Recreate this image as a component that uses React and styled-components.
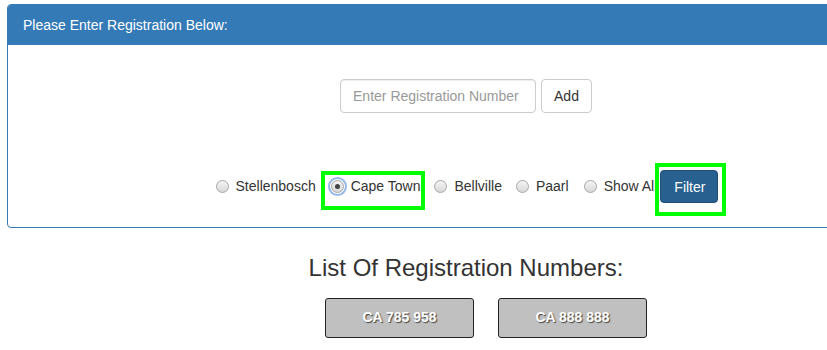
import React from 'react';
import styled, { createGlobalStyle } from 'styled-components';

const GlobalStyle = createGlobalStyle`
  html, body {
    margin: 0;
    background: #fff;
    overflow: hidden;
  }
  body {
    font-family: "Liberation Sans", Arial, sans-serif;
    font-size: 14px;
    line-height: 1.42857;
    color: #333;
  }
`;

const Page = styled.div`
  width: 932px;
  padding-top: 4px;
`;

const Panel = styled.div`
  margin: 0 7px;
  border: 1px solid #337ab7;
  border-radius: 4px;
  overflow: hidden;
`;

const PanelHeading = styled.div`
  background: #337ab7;
  color: #fff;
  padding: 10px 15px;
  line-height: 20px;
`;

const PanelBody = styled.div`
  padding: 34px 15px 11px;
  display: flex;
  flex-direction: column;
  align-items: center;
`;

const InputRow = styled.div`
  display: flex;
  gap: 5px;
`;

const TextInput = styled.input`
  box-sizing: border-box;
  width: 196px;
  height: 34px;
  padding: 6px 12px;
  border: 1px solid #ccc;
  border-radius: 4px;
  font-family: inherit;
  font-size: 14px;
  color: #555;
  box-shadow: inset 0 1px 1px rgba(0, 0, 0, 0.075);
  &::placeholder {
    color: #999;
  }
`;

const Button = styled.button`
  box-sizing: border-box;
  height: ${p => (p.$primary ? 33 : 34)}px;
  padding: 6px 12px 6px ${p => (p.$primary ? 13 : 12)}px;
  border: 1px solid ${p => (p.$primary ? '#204d74' : '#ccc')};
  border-radius: 4px;
  background: ${p => (p.$primary ? '#286090' : '#fff')};
  color: ${p => (p.$primary ? '#fff' : '#333')};
  font-family: inherit;
  font-size: 14px;
  line-height: 20px;
`;

const RadioRow = styled.div`
  display: flex;
  align-items: flex-start;
  margin-top: 50px;
  padding-left: 10px;
`;

const Option = styled.label`
  display: flex;
  align-items: center;
  gap: 7px;
  margin-top: ${p => (p.$highlight ? 8 : 13)}px;
  margin-right: ${p => p.$gap}px;
  padding: ${p => (p.$highlight ? '1px 1px 10px 6px' : '0')};
  border: ${p => (p.$highlight ? '4px solid #00ff00' : 'none')};
  line-height: 20px;
  white-space: nowrap;
`;

const Radio = styled.span`
  box-sizing: border-box;
  position: relative;
  width: 13px;
  height: 13px;
  border-radius: 50%;
  border: 1px solid #a6a6a6;
  background: linear-gradient(#f4f4f4, #d8d8d8);
  outline: ${p => (p.$focus ? '2px solid #94b8ec' : 'none')};
  outline-offset: 1px;
  &::after {
    content: '';
    display: ${p => (p.$checked ? 'block' : 'none')};
    position: absolute;
    left: 3px;
    top: 3px;
    width: 5px;
    height: 5px;
    border-radius: 50%;
    background: #444;
  }
`;

const FilterBox = styled.div`
  margin-left: -2px;
  background: #fff;
  border: 4px solid #00ff00;
  padding: 3px 4px 9px 1px;
  display: flex;
`;

const Heading = styled.h3`
  margin: 27px 0 17px;
  text-align: center;
  font-size: 24px;
  font-weight: 400;
  line-height: 1.1;
  color: #333;
`;

const PlateList = styled.ul`
  margin: 0;
  padding: 0 0 0 40px;
  list-style: none;
  display: flex;
  justify-content: center;
  gap: 24px;
`;

const Plate = styled.li`
  box-sizing: border-box;
  width: 149px;
  height: 40px;
  display: flex;
  align-items: center;
  justify-content: center;
  background: #c0c0c0;
  border: 1px solid #222;
  border-radius: 3px;
  color: #fff;
  font-weight: 700;
  font-size: 14px;
  text-shadow: 1px 1px 1px #444;
`;

const towns = [
  { name: 'Stellenbosch', gap: 5 },
  { name: 'Cape Town', gap: 9, checked: true },
  { name: 'Bellville', gap: 14 },
  { name: 'Paarl', gap: 15 },
  { name: 'Show All', gap: 0 },
];

export default function App() {
  return (
    <>
      <GlobalStyle />
      <Page>
        <Panel>
          <PanelHeading>Please Enter Registration Below:</PanelHeading>
          <PanelBody>
            <InputRow>
              <TextInput placeholder="Enter Registration Number" />
              <Button>Add</Button>
            </InputRow>
            <RadioRow>
              {towns.map(t => (
                <Option key={t.name} $gap={t.gap} $highlight={t.checked}>
                  <Radio $checked={t.checked} $focus={t.checked} />
                  {t.name}
                </Option>
              ))}
              <FilterBox>
                <Button $primary>Filter</Button>
              </FilterBox>
            </RadioRow>
          </PanelBody>
        </Panel>
        <Heading>List Of Registration Numbers:</Heading>
        <PlateList>
          <Plate>CA 785 958</Plate>
          <Plate>CA 888 888</Plate>
        </PlateList>
      </Page>
    </>
  );
}
